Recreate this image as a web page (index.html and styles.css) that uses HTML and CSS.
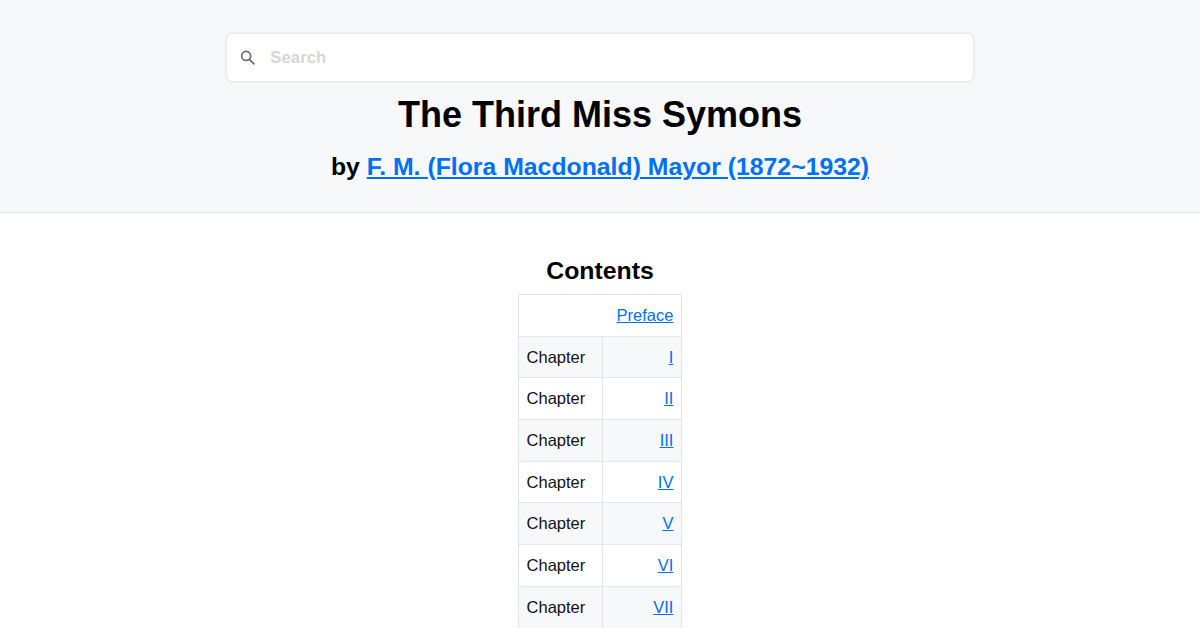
FILE: index.html
```html
<!DOCTYPE html>
<html lang="en">
<head>
<meta charset="utf-8">
<title>The Third Miss Symons</title>
<link rel="stylesheet" href="styles.css">
</head>
<body>
<header class="masthead">
  <form class="search">
    <svg class="search-icon" viewBox="0 0 18 18" aria-hidden="true"><circle cx="7.2" cy="6.9" r="4.5"/><path d="M10.4 10.4 15.4 15.4"/></svg>
    <input class="search-input" type="text" placeholder="Search" aria-label="Search">
  </form>
  <h1 class="title">The Third Miss Symons</h1>
  <h2 class="author">by <a href="#">F. M. (Flora Macdonald) Mayor (1872~1932)</a></h2>
</header>
<main class="contents">
  <h2 class="contents-title">Contents</h2>
  <table class="toc">
    <tr><td class="number" colspan="2"><a href="#">Preface</a></td></tr>
    <tr><td class="label">Chapter</td><td class="number"><a href="#">I</a></td></tr>
    <tr><td class="label">Chapter</td><td class="number"><a href="#">II</a></td></tr>
    <tr><td class="label">Chapter</td><td class="number"><a href="#">III</a></td></tr>
    <tr><td class="label">Chapter</td><td class="number"><a href="#">IV</a></td></tr>
    <tr><td class="label">Chapter</td><td class="number"><a href="#">V</a></td></tr>
    <tr><td class="label">Chapter</td><td class="number"><a href="#">VI</a></td></tr>
    <tr class="last"><td class="label">Chapter</td><td class="number"><a href="#">VII</a></td></tr>
  </table>
</main>
</body>
</html>
```
FILE: styles.css
```css
* { box-sizing: border-box; }
body {
  margin: 0;
  height: 628px;
  overflow: hidden;
  font: 16.5px/25px "Liberation Sans", Arial, sans-serif;
  color: #121212;
  background: #fff;
}
a { color: #0070f3; }
.masthead {
  height: 213px;
  padding-top: 32px;
  background: #f6f8fa;
  border-bottom: 1px solid #e3e5e8;
  text-align: center;
}
.search {
  display: flex;
  align-items: center;
  width: 750px;
  height: 51px;
  margin: 0 auto;
  padding-left: 12px;
  background: #fff;
  border: 2px solid #ededed;
  border-radius: 8px;
}
.search-icon {
  width: 18px;
  height: 18px;
  margin-right: 13.3px;
  fill: none;
  stroke: #666;
  stroke-width: 1.6;
}
.search-input {
  flex: 1;
  min-width: 0;
  padding: 0;
  border: 0;
  outline: 0;
  background: none;
  font: bold 16.8px "Liberation Sans", Arial, sans-serif;
}
.search-input::placeholder { color: #d6d6d6; }
.title {
  margin: 10px 0 0;
  font-size: 36px;
  line-height: 43px;
  color: #000;
}
.author {
  margin: 16px 0 0;
  font-size: 24.8px;
  line-height: 30px;
  color: #000;
}
.contents { padding-top: 43px; }
.contents-title {
  margin: 0 0 8px;
  font-size: 24.8px;
  line-height: 30px;
  text-align: center;
  color: #000;
}
.toc {
  width: 164px;
  margin: 0 auto;
  border-collapse: collapse;
  table-layout: auto;
}
.toc td {
  height: 41.67px;
  padding: 0.6px 7.6px 0;
  border: 1px solid #e3e5e8;
}
.toc tr:nth-child(even) { background: #f6f8fa; }
.toc .last td { height: 43px; padding-bottom: 1px; }
.toc .label { width: 84px; }
.number { text-align: right; }
```
